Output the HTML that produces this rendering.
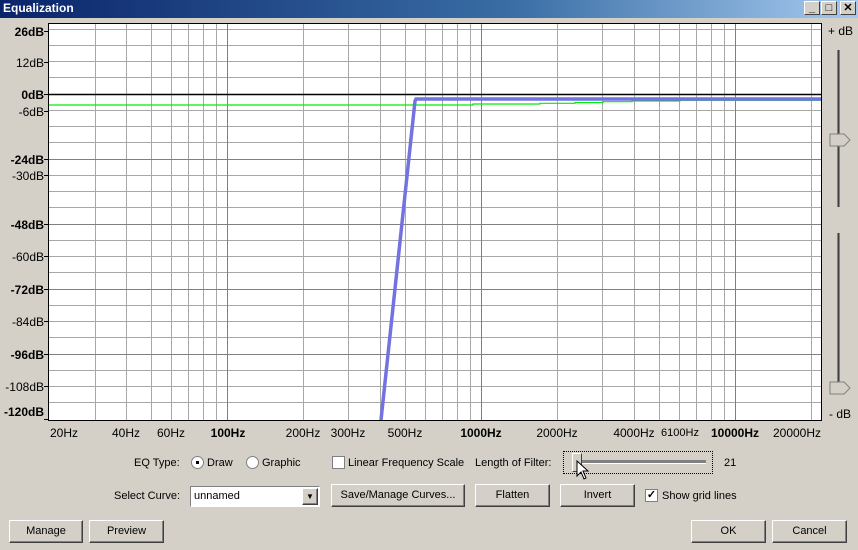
<!DOCTYPE html>
<html><head><style>
body{margin:0;width:858px;height:550px;background:#d4d0c8;font-family:"Liberation Sans",Tahoma,sans-serif;font-size:11px;position:relative;overflow:hidden;color:#000}
.ab{position:absolute}
.title{left:0;top:0;width:858px;height:18px;background:linear-gradient(90deg,#0a246a,#3a6ea5 60%,#a6caf0);color:#fff;font-weight:bold;font-size:12px;line-height:17px;padding-left:3px;box-sizing:border-box}
.tb{top:1px;width:16px;height:14px;background:#d4d0c8;border:1px solid;border-color:#fff #404040 #404040 #fff;box-sizing:border-box;font-size:11px;line-height:12px;text-align:center;font-weight:bold;color:#000}
.btn{height:21px;background:#d4d0c8;border:1px solid;border-color:#fff #404040 #404040 #fff;box-shadow:inset -1px -1px #808080;box-sizing:border-box;text-align:center;line-height:19px;font-size:11px}
.lbl{font-size:11px}
</style></head><body>
<div class="ab title">Equalization</div>
<div class="ab tb" style="left:804px">_</div>
<div class="ab tb" style="left:821px">□</div>
<div class="ab tb" style="left:840px">✕</div>

<svg class="ab" style="left:0;top:0" width="858" height="450" font-family="Liberation Sans, sans-serif">
<rect x="49" y="23" width="773" height="397" fill="#fff"/>
<g stroke="#a8a8a8" stroke-width="1">
<line x1="49" x2="822" y1="29.5" y2="29.5"/><line x1="49" x2="822" y1="45.5" y2="45.5"/><line x1="49" x2="822" y1="61.5" y2="61.5"/><line x1="49" x2="822" y1="77.5" y2="77.5"/>
<line x1="49" x2="822" y1="110.5" y2="110.5"/><line x1="49" x2="822" y1="126.5" y2="126.5"/><line x1="49" x2="822" y1="142.5" y2="142.5"/><line x1="49" x2="822" y1="175.5" y2="175.5"/><line x1="49" x2="822" y1="191.5" y2="191.5"/><line x1="49" x2="822" y1="207.5" y2="207.5"/><line x1="49" x2="822" y1="240.5" y2="240.5"/><line x1="49" x2="822" y1="256.5" y2="256.5"/><line x1="49" x2="822" y1="272.5" y2="272.5"/><line x1="49" x2="822" y1="305.5" y2="305.5"/><line x1="49" x2="822" y1="321.5" y2="321.5"/><line x1="49" x2="822" y1="337.5" y2="337.5"/><line x1="49" x2="822" y1="370.5" y2="370.5"/><line x1="49" x2="822" y1="386.5" y2="386.5"/><line x1="49" x2="822" y1="402.5" y2="402.5"/>
<line y1="23" y2="420" x1="95.5" x2="95.5"/><line y1="23" y2="420" x1="126.5" x2="126.5"/><line y1="23" y2="420" x1="151.5" x2="151.5"/><line y1="23" y2="420" x1="171.5" x2="171.5"/><line y1="23" y2="420" x1="188.5" x2="188.5"/><line y1="23" y2="420" x1="203.5" x2="203.5"/><line y1="23" y2="420" x1="216.5" x2="216.5"/>
<line y1="23" y2="420" x1="303.5" x2="303.5"/><line y1="23" y2="420" x1="348.5" x2="348.5"/><line y1="23" y2="420" x1="380.5" x2="380.5"/><line y1="23" y2="420" x1="405.5" x2="405.5"/><line y1="23" y2="420" x1="425.5" x2="425.5"/><line y1="23" y2="420" x1="442.5" x2="442.5"/><line y1="23" y2="420" x1="457.5" x2="457.5"/><line y1="23" y2="420" x1="470.5" x2="470.5"/>
<line y1="23" y2="420" x1="557.5" x2="557.5"/><line y1="23" y2="420" x1="602.5" x2="602.5"/><line y1="23" y2="420" x1="634.5" x2="634.5"/><line y1="23" y2="420" x1="659.5" x2="659.5"/><line y1="23" y2="420" x1="679.5" x2="679.5"/><line y1="23" y2="420" x1="696.5" x2="696.5"/><line y1="23" y2="420" x1="711.5" x2="711.5"/><line y1="23" y2="420" x1="724.5" x2="724.5"/>
<line y1="23" y2="420" x1="811.5" x2="811.5"/>
</g>
<g stroke="#808080">
<line x1="49" x2="822" y1="159.5" y2="159.5"/><line x1="49" x2="822" y1="224.5" y2="224.5"/><line x1="49" x2="822" y1="289.5" y2="289.5"/><line x1="49" x2="822" y1="354.5" y2="354.5"/>
<line y1="23" y2="420" x1="227.5" x2="227.5"/><line y1="23" y2="420" x1="481.5" x2="481.5"/><line y1="23" y2="420" x1="735.5" x2="735.5"/>
</g>
<line x1="49" x2="822" y1="94.5" y2="94.5" stroke="#000" stroke-width="1.5"/>
<polyline fill="none" stroke="#00ee00" stroke-width="1.2" points="49,105 473,105 473,104 540,104 540,103.3 575,103.3 575,102.5 603,102.5 603,101.7 632,101.7 632,101 680,101 680,100.3 822,100.3"/>
<polyline fill="none" stroke="#7272e0" stroke-width="3.5" points="381,420 415,101 416,99 822,99"/>
<rect x="48.5" y="23.5" width="773" height="397" fill="none" stroke="#000"/>
<g stroke="#000">
<line x1="44" x2="49" y1="31.5" y2="31.5"/><line x1="44" x2="49" y1="62.5" y2="62.5"/><line x1="44" x2="49" y1="94.5" y2="94.5"/><line x1="44" x2="49" y1="111.5" y2="111.5"/><line x1="44" x2="49" y1="159.5" y2="159.5"/><line x1="44" x2="49" y1="175.5" y2="175.5"/><line x1="44" x2="49" y1="224.5" y2="224.5"/><line x1="44" x2="49" y1="256.5" y2="256.5"/><line x1="44" x2="49" y1="289.5" y2="289.5"/><line x1="44" x2="49" y1="321.5" y2="321.5"/><line x1="44" x2="49" y1="354.5" y2="354.5"/><line x1="44" x2="49" y1="386.5" y2="386.5"/><line x1="44" x2="49" y1="419.5" y2="419.5"/>
</g>
<g font-size="12" text-anchor="end">
<text x="44" y="36" font-weight="bold">26dB</text><text x="44" y="67">12dB</text><text x="44" y="99" font-weight="bold">0dB</text><text x="44" y="116">-6dB</text><text x="44" y="164" font-weight="bold">-24dB</text><text x="44" y="180">-30dB</text><text x="44" y="229" font-weight="bold">-48dB</text><text x="44" y="261">-60dB</text><text x="44" y="294" font-weight="bold">-72dB</text><text x="44" y="326">-84dB</text><text x="44" y="359" font-weight="bold">-96dB</text><text x="44" y="391">-108dB</text><text x="44" y="416" font-weight="bold">-120dB</text>
</g>
<g font-size="12" text-anchor="middle">
<text x="64" y="437">20Hz</text><text x="126" y="437">40Hz</text><text x="171" y="437">60Hz</text><text x="228" y="437" font-weight="bold">100Hz</text><text x="303" y="437">200Hz</text><text x="348" y="437">300Hz</text><text x="405" y="437">500Hz</text><text x="481" y="437" font-weight="bold">1000Hz</text><text x="557" y="437">2000Hz</text><text x="634" y="437">4000Hz</text><text x="680" y="436" font-size="11">6100Hz</text><text x="735" y="437" font-weight="bold">10000Hz</text><text x="797" y="437">20000Hz</text>
</g>
<text x="828" y="35" font-size="12">+ dB</text>
<text x="829" y="418" font-size="12">- dB</text>
<rect x="837" y="50" width="3" height="157" fill="#808080"/><rect x="838" y="50" width="1" height="157" fill="#404040"/>
<rect x="837" y="233" width="3" height="160" fill="#808080"/><rect x="838" y="233" width="1" height="160" fill="#404040"/>
<path d="M830,134 h14 l6,6 l-6,6 h-14z" fill="#d4d0c8" stroke="#808080"/>
<path d="M830,382 h14 l6,6 l-6,6 h-14z" fill="#d4d0c8" stroke="#808080"/>
</svg>

<div class="ab lbl" style="left:134px;top:457px">EQ Type:</div>
<div class="ab" style="left:191px;top:456px;width:11px;height:11px;border-radius:50%;background:#fff;border:1px solid #808080"></div>
<div class="ab" style="left:196px;top:461px;width:3px;height:3px;background:#000"></div>
<div class="ab lbl" style="left:207px;top:457px">Draw</div>
<div class="ab" style="left:246px;top:456px;width:11px;height:11px;border-radius:50%;background:#fff;border:1px solid #808080"></div>
<div class="ab lbl" style="left:262px;top:457px">Graphic</div>
<div class="ab" style="left:332px;top:456px;width:11px;height:11px;background:#fff;border:1px solid #808080"></div>
<div class="ab lbl" style="left:348px;top:457px">Linear Frequency Scale</div>
<div class="ab lbl" style="left:475px;top:457px">Length of Filter:</div>
<div class="ab" style="left:563px;top:451px;width:150px;height:23px;border:1px dotted #000;box-sizing:border-box"></div>
<div class="ab" style="left:572px;top:460px;width:134px;height:3px;background:#808080;border-bottom:1px solid #fff"></div>
<div class="ab" style="left:572px;top:453px;width:8px;height:17px;background:#d4d0c8;border:1px solid;border-color:#fff #404040 #404040 #fff"></div>
<svg class="ab" style="left:576px;top:460px" width="14" height="22"><path d="M1,1 L1,16 L5,12 L8,19 L10,18 L7,11 L12,11 Z" fill="#fff" stroke="#000"/></svg>
<div class="ab lbl" style="left:724px;top:457px">21</div>

<div class="ab lbl" style="left:114px;top:490px">Select Curve:</div>
<div class="ab" style="left:190px;top:486px;width:130px;height:21px;background:#fff;border:1px solid;border-color:#808080 #fff #fff #808080;box-sizing:border-box;font-size:11px;line-height:19px;padding-left:3px">unnamed</div>
<div class="ab btn" style="left:302px;top:488px;width:16px;height:17px;font-size:8px;line-height:15px">▼</div>
<div class="ab btn" style="left:331px;top:484px;width:134px;height:23px;line-height:21px">Save/Manage Curves...</div>
<div class="ab btn" style="left:475px;top:484px;width:75px;height:23px;line-height:21px">Flatten</div>
<div class="ab btn" style="left:560px;top:484px;width:75px;height:23px;line-height:21px">Invert</div>
<div class="ab" style="left:645px;top:489px;width:11px;height:11px;background:#fff;border:1px solid #808080;font-size:11px;line-height:11px;text-align:center;font-weight:bold">✓</div>
<div class="ab lbl" style="left:662px;top:490px">Show grid lines</div>

<div class="ab btn" style="left:9px;top:520px;width:74px;height:23px;line-height:21px">Manage</div>
<div class="ab btn" style="left:89px;top:520px;width:75px;height:23px;line-height:21px">Preview</div>
<div class="ab btn" style="left:691px;top:520px;width:75px;height:23px;line-height:21px">OK</div>
<div class="ab btn" style="left:772px;top:520px;width:75px;height:23px;line-height:21px">Cancel</div>
</body></html>
